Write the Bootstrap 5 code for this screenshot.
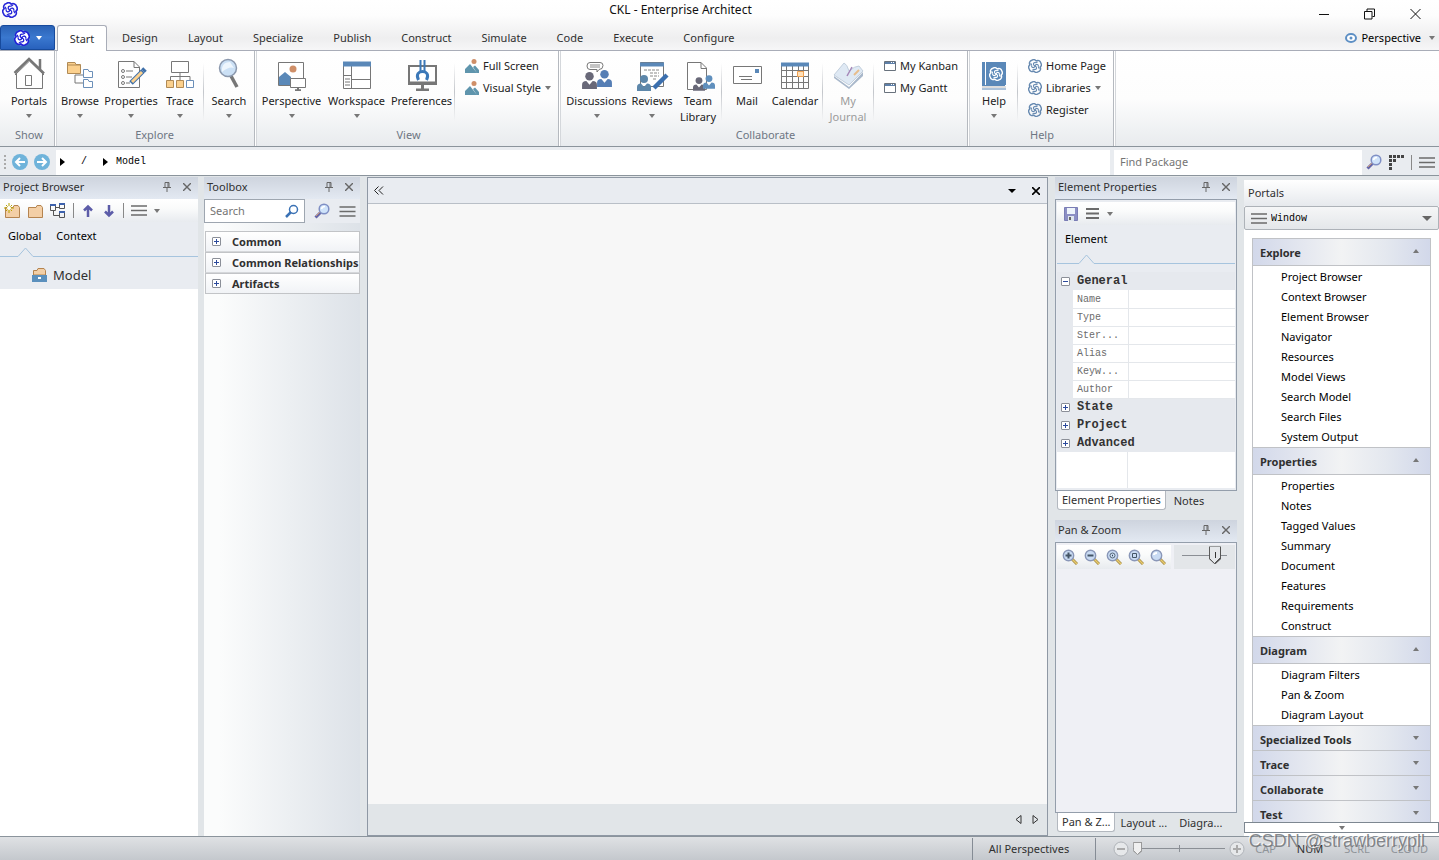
<!DOCTYPE html>
<html lang="en">
<head>
<meta charset="utf-8">
<meta name="viewport" content="width=device-width, initial-scale=1">
<title>CKL - Enterprise Architect</title>
<link rel="stylesheet" href="https://cdn.jsdelivr.net/npm/bootstrap@5.3.0/dist/css/bootstrap.min.css">
<style>
body{font:11px/16px "Noto Sans","Open Sans",sans-serif;color:#303030;background:#e1e5e8;height:100vh;overflow:hidden}
button{border:0;background:none;padding:0;color:inherit;font:inherit;line-height:16px;white-space:nowrap}
svg{display:block;flex:none;fill:none}
.mono{font-family:"Liberation Mono",monospace;font-size:10px;color:#000}
.caret{width:0;height:0;border:3px solid transparent;border-top:4px solid #777;border-bottom:0;flex:none}
.caret.up{border-top:0;border-bottom:4px solid #777}
/* title and tabs */
.top-area{background:linear-gradient(#fff 0,#fdfdfd 30%,#eeeeef 75%,#f7f7f8)}
.title-row{height:25px;padding:2px 0 0 2px}
.title-row .app-title{font-size:12px;color:#111;padding-right:96px}
.win-btns{gap:35px;top:8px;right:18px}
.tab-row{height:26px;border-bottom:1px solid #a9adb8}
.file-btn{width:55px;height:25px;background:linear-gradient(#2a62b5,#3a78cf 50%,#2861bd);border:1px solid #174a9c;border-radius:3px 3px 0 0;gap:6px}
.file-btn .caret{border-width:4px 3px 0;border-top-color:#fff}
.rtab{height:26px;padding:0 15px}
.rtab.on{width:50px;padding:0;margin:0 0 -1px 2px;background:#fff;border:1px solid #a9adb8;border-bottom:0;border-radius:3px 3px 0 0}
/* ribbon */
.ribbon{height:96px;background:linear-gradient(#fff 0,#fdfdfd 50%,#e8ebee);border-bottom:1px solid #8b949c}
.rgroup{border-right:1px solid #b5b9bf;box-shadow:1px 0 #fff,2px 0 #d4d7db;padding-top:4px}
.g-show{padding-left:4px}
.g-view{padding-left:4px;width:304px}
.g-collab{padding-left:5px;width:409px}
.g-help{padding-left:3px;width:146px}
.rgroup h6{font-size:11px;line-height:16px;font-weight:400;color:#6d7683;margin:0 0 3px;text-align:center}
.big{padding-top:2px;height:70px;display:flex;flex-direction:column;align-items:center;line-height:16px;color:#222;white-space:nowrap;flex:none}
.big svg{width:34px;height:34px;margin-bottom:2px}
.big .caret{margin-top:5px}
.big:disabled{color:#9b9b9b}
.w46{width:46px}.w50{width:50px}.w52{width:52px}.w65{width:65px}
.vsep{width:1px;height:58px;background:linear-gradient(transparent,#c3c6cb,transparent)}
.small-col{padding-left:10px}
.small-col button{height:22px;display:flex;align-items:center;gap:4px;color:#222}
/* address bar */
.addr{height:30px;background:#e9ecf0;border-bottom:1px solid #8b949c;padding-top:3px}
.addr .path{background:#fff;padding-left:4px}
.addr .nav-btns{gap:6px;padding:0 2px 0 4px}
.addr input{border:0;background:#fff;width:248px;padding:0 6px;color:#222;outline:0}
.addr input::placeholder,.sbox input::placeholder{color:#747474;opacity:1}
.tri{width:0;height:0;border:4px solid transparent;border-left:5px solid #000;border-right:0}
.tri.doc{border:4px solid transparent;border-top-color:#000;border-bottom:0}
.tri.sel{border:5px solid transparent;border-top-color:#666;border-bottom:0}
.bar{width:1px;height:15px;background:#888}
.gap7{gap:7px}
/* panels */
main{min-height:0;padding-top:1px;gap:7px}
.phead{height:22px;background:linear-gradient(#ced4de,#e3e9f2);padding:0 7px 2px 3px;gap:12px}
.tools{height:23px;background:linear-gradient(#fff,#fafbfb 40%,#e8ebef)}
.surface{background:#e9ecf1}
.proj{width:198px;margin-right:-1px}.tbox{width:156px}.props{width:182px}.ports{width:195px}
.inner-tab{color:#000;height:23px}
.inner-tabs{padding:2px 0 0 8px;gap:15px}
.notch{height:14px;width:100%}
.model-row{padding:0 0 0 32px;font-size:13px;height:28px;gap:6px}
.sbox{border:1px solid #9ea6b0;background:#fff;width:101px;height:24px}
.sbox input{border:0;outline:0;width:80px;padding:0 5px;background:none}
.tlist{background:linear-gradient(90deg,#fbfcfc 10%,#dde2e8);padding:8px 0 0 1px}
.tlist button{display:flex;align-items:center;width:155px;height:21px;font-weight:700;gap:11px;padding-left:6px;border:1px solid #c2c4c7;border-bottom-color:#d5d7da;background:linear-gradient(#fff,#f1f3f6)}
.tlist button:last-child{border-bottom-color:#c2c4c7}
.pm{width:9px;height:9px;border:1px solid #8b8f98;border-radius:1px;background:#fff;position:relative;display:block;flex:none}
.pm::before,.pm.plus::after{content:"";position:absolute;left:1px;top:3px;width:5px;height:1px;background:#2c4a9c}
.pm.plus::after{left:3px;top:1px;width:1px;height:5px}
.center{border:1px solid #8f98a4}
.dochead{height:26px;border-bottom:1px solid #b9bfc7;background:#e9ecf1;padding:0 7px 0 6px}
.docfoot{height:31px;padding-right:8px;gap:10px}
.canvas{background:#f7f7f7}
.frame{border:1px solid #949eab;background:#e9ecf1;padding:2px 1px}
.ptools{padding-left:7px}
.btabs{height:20px;padding-left:2px}
.btabs button{padding:0 8px;height:19px}
.btabs .on{background:#fff;border:1px solid #b3b8bf;border-top:0;border-radius:0 0 3px 3px;padding:0 4px}
.btabs.three{margin-bottom:3px}
.btabs.three button{padding:0 6px}
.btabs.three .on{padding:0 3px 0 4px}
.grid-t{width:100%;table-layout:fixed;border-collapse:collapse;background:#e6e9ee;margin-top:4px}
.grid-t col.c1{width:16px}.grid-t col.c2{width:55px}
.grid-t th,.grid-t td{height:18px;line-height:17px;padding:0 0 0 4px;border:0;font-weight:400;color:#6c6c6c}
.grid-t tr.r *{background:#fff;border-bottom:1px solid #e4e7eb}
.grid-t tr.r td:first-child{background:#e6e9ee;border:0}
.grid-t tr.r th{border-right:1px solid #e4e7eb}
.grid-t tr.h th{font-size:12px;font-weight:700;color:#333}
.filler{background:#fff;height:36px}
.filler div{width:71px;border-right:1px solid #e4e7eb}
input[type=range]{appearance:none;background:linear-gradient(#8b8f95,#8b8f95) center/100% 1px no-repeat;height:20px;margin:0}
input[type=range]::-webkit-slider-thumb{appearance:none;width:12px;height:18px;clip-path:polygon(0 0,100% 0,100% 70%,50% 100%,0 70%);background:linear-gradient(#333,#333) center 6px/1px 6px no-repeat,conic-gradient(from -45deg at 50% 100%,#e4e7ea 90deg,transparent 0) center 1px/10px 16px no-repeat,linear-gradient(#e4e7ea,#e4e7ea) center 1px/10px 11px no-repeat,#555}
.pan-head{margin-top:9px}
.pan-body{background:#eff0f5}
.zoomtools{width:114px;height:24px;padding:0 5px;gap:6px}
.pz{background:#e3e6e9;padding:0 8px;height:24px}.pz input{width:45px}
.ports{background:#fff;margin-top:3px}
.ports .ptitle{height:26px;padding:5px 4px;background:linear-gradient(#fff,#e6e9ed)}
.wsel{height:24px;border:1px solid #adb2b8;border-radius:2px;background:linear-gradient(#f5f6f7,#e4e7ea);padding:0 6px}
.wsel select{appearance:none;border:0;background:none;outline:0;padding:2px 4px 0}
.plist{margin:8px 8px 0;border:solid #c0c2c6;border-width:0 1px;min-height:0}
.plist .ph{display:flex;width:100%;height:25px;border-top:1px solid #c0c2c6;padding:7px 11px 0 7px;justify-content:space-between;font-weight:700;background:linear-gradient(90deg,#d2d8ea,#f2f3f4 50%,#e4e8ef 75%,#d2d8ea);line-height:14px}
.plist .ph .caret{margin-top:3px}
.plist .ph.open{height:28px;border-bottom:1px solid #c0c2c6}
.plist ul{padding:1px 0 0 28px;margin:0;list-style:none}
.plist a{color:#000;text-decoration:none;line-height:20px;display:block}
.more{height:11px;border:1px solid #7d8791;background:#fff;margin-bottom:3px}
.status{height:24px;border-top:1px solid #8b949c;background:linear-gradient(#dfe1e4,#c4c8cd)}
.status .bar{height:22px;background:#858c95}
.status .persp{padding:0 26px 0 16px}
.zoomer{padding:0 10px 0 17px;gap:4px}
input.zs{width:92px;background:linear-gradient(#8b8f95,#8b8f95) center/1px 7px no-repeat,linear-gradient(#8b8f95,#8b8f95) center/100% 1px no-repeat}
input.zs::-webkit-slider-thumb{height:13px;width:9px;background:conic-gradient(from -45deg at 50% 100%,#f0f0f0 90deg,transparent 0) center 1px/7px 11px no-repeat,linear-gradient(#f0f0f0,#f0f0f0) center 1px/7px 7px no-repeat,#999}
.keys{gap:21px;margin-right:11px}
.off{color:#8f9499}
.wm{right:14px;bottom:6px;font:18px/26px "Liberation Sans",sans-serif;color:#74777b;text-shadow:-1px -1px #fff;pointer-events:none;opacity:.85}
</style>
</head>
<body class="d-flex flex-column">
<svg width="0" height="0" class="position-absolute" aria-hidden="true">
<symbol id="logo" viewBox="0 0 16 16"><g stroke="currentColor" transform="rotate(12 8 8)"><path stroke-width="1.600" d="M8 2A3.600 3.600 0 0 1 13.700 3.200A3.600 3.600 0 0 1 14 8A3.600 3.600 0 0 1 12.800 13.700A3.600 3.600 0 0 1 8 14A3.600 3.600 0 0 1 2.300 12.800A3.600 3.600 0 0 1 2 8A3.600 3.600 0 0 1 3.200 2.300A3.600 3.600 0 0 1 8 2Z"/><path stroke-width="1.300" d="M8 8C5 7.500 5 4 8 4.200M8 8C8.500 5 12 5 11.800 8M8 8C11 8.500 11 12 8 11.800M8 8C7.500 11 4 11 4.200 8M8 4.200L10 2.500M11.800 8L13.500 10M8 11.800L6 13.500M4.200 8L2.500 6"/></g></symbol>
<symbol id="pin" viewBox="0 0 8 10"><path d="M2 .5H6V5.500H2ZM0 5.500H8M4 6V10M5 1V5" stroke="#666"/></symbol>
<symbol id="x" viewBox="0 0 8 8"><path d="M0 0L8 8M8 0L0 8" stroke="#666" stroke-width="1.400"/></symbol>
<symbol id="burger" viewBox="0 0 16 11"><path d="M0 1H16M0 5.500H16M0 10H16" stroke="#6b6b6b" stroke-width="1.700"/></symbol>
<symbol id="mag" viewBox="0 0 16 16"><path d="M1.500 14.500L6.500 9.500" stroke="#6666a8" stroke-width="3"/><path d="M2 13L6 9" stroke="#d39c72"/><circle cx="10" cy="6" r="4.800" fill="#cfe3fa" stroke="#7f8fc4" stroke-width="1.500"/><path d="M7.500 6Q8 3.500 11 3.500" stroke="#fff" stroke-width="1.500"/></symbol>
<symbol id="zm" viewBox="0 0 16 16"><path d="M10 10L15 15" stroke="#a38b48" stroke-width="3"/><path d="M10 10L15 15" stroke="#e9cb6c" stroke-width="1.400"/><circle cx="6.500" cy="6.500" r="5.200" fill="#c9dbf3" stroke="#8a97b8" stroke-width="1.400"/></symbol>
<symbol id="pic" viewBox="0 0 14 14"><circle cx="9" cy="2.500" r="2.500" fill="#cf8f68"/><path d="M0 14V10L5 5L12 14ZM8 8L10 6.500L14 11V14H12Z" fill="#5f95ad"/></symbol>
<symbol id="win" viewBox="0 0 12 10"><path d="M.5 .5H11.500V9.500H.5Z" fill="#fff" stroke="#69727d"/><path d="M1 2H11" stroke="#5d7fa8" stroke-width="2"/><path d="M7 1.500H8M9 1.500H10" stroke="#fff"/></symbol>
<symbol id="person" viewBox="0 0 14 16"><circle cx="7" cy="4" r="4" fill="currentColor"/><path d="M0 16V12Q0 8.500 4 8.500L7 12L10 8.500Q14 8.500 14 12V16Z" fill="currentColor"/></symbol>
<symbol id="folder" viewBox="0 0 15 14"><path d="M.5 13.500V3.500H8L9 1.500H13L14.500 3.500V13.500Z" fill="#f3cfa6" stroke="#b5844f"/></symbol>
</svg>

<header class="top-area">
 <div class="title-row d-flex position-relative">
  <svg width="16" height="16" style="color:#2727d8"><use href="#logo"/></svg>
  <div class="app-title flex-grow-1 text-center">CKL - Enterprise Architect</div>
  <div class="win-btns d-flex align-items-end position-absolute">
   <button aria-label="Minimize"><svg width="10" height="12"><path d="M0 6.500H10" stroke="#111"/></svg></button>
   <button aria-label="Restore"><svg width="11" height="12"><path d="M.5 3.500H8V11H.5ZM3 3V1H10.500V8.500H8.500" stroke="#111"/></svg></button>
   <button aria-label="Close"><svg width="11" height="12"><path d="M.5 1L10.500 11M10.500 1L.5 11" stroke="#111"/></svg></button>
  </div>
 </div>
 <nav class="tab-row d-flex">
  <button class="file-btn d-flex align-items-center justify-content-center" aria-label="File"><svg width="16" height="16"><circle cx="8" cy="8" r="7.500" fill="#fff"/><use href="#logo" style="color:#2020d8"/></svg><span class="caret"></span></button>
  <button class="rtab on">Start</button><button class="rtab">Design</button><button class="rtab">Layout</button><button class="rtab">Specialize</button><button class="rtab">Publish</button><button class="rtab">Construct</button><button class="rtab">Simulate</button><button class="rtab">Code</button><button class="rtab">Execute</button><button class="rtab">Configure</button>
  <button class="ms-auto d-flex align-items-center gap-1 text-black me-1"><svg width="12" height="10"><ellipse cx="6" cy="5" rx="5" ry="4" fill="#fff" stroke="#5d8fc4" stroke-width="2"/><circle cx="6" cy="5" r="1.500" fill="#5d8fc4"/></svg>Perspective<span class="caret ms-1"></span></button>
 </nav>
</header>

<section class="ribbon d-flex">
 <div class="rgroup g-show d-flex flex-column justify-content-between"><div class="d-flex">
  <button class="big w50"><svg viewBox="0 0 34 34"><path d="M4.500 16V31.500H30.500V16M13.500 28.500V18.500H19.500V28.500ZM3 18L17.500 4L32 18" stroke="#777" /><path d="M2.500 16L17 2L32 16.500M28 12V2" stroke="#777" stroke-width="2.500"/></svg>Portals<span class="caret"></span></button></div><h6>Show</h6></div>
 <div class="rgroup d-flex flex-column justify-content-between"><div class="d-flex">
  <button class="big w50"><svg viewBox="0 0 34 34"><path d="M12 18V26H20M12 18H20" stroke="#777"/><path d="M4.500 16.500V5.500H12L13 7.500H17.500V16.500Z" fill="#fbd08d" stroke="#b08a55"/><path d="M5 8H17" stroke="#b08a55"/><path d="M20.500 20.500V12.500H25L26 14.500H29.500V20.500ZM20.500 30.500V22.500H25L26 24.500H29.500V30.500Z" fill="#fff" stroke="#6b8fb8"/></svg>Browse<span class="caret"></span></button>
  <button class="big w52"><svg viewBox="0 0 34 34"><path d="M4.500 4.500H20L25.500 10V30.500H4.500ZM20 4.500V10.500H25.500M12 14H19M12 20H18M12 26H16" stroke="#777"/><circle cx="9" cy="14" r="1.500" stroke="#777"/><circle cx="9" cy="20" r="1.500" stroke="#777"/><circle cx="9" cy="26" r="1.500" stroke="#777"/><path d="M17 26L29 14" stroke="#3e6fa8" stroke-width="5"/><path d="M18 25L28 15" stroke="#fbd08d" stroke-width="3"/><path d="M29 14L31 12" stroke="#3e6fa8" stroke-width="5"/></svg>Properties<span class="caret"></span></button>
  <button class="big w46"><svg viewBox="0 0 34 34"><path d="M8.500 4.500H25.500V15.500H8.500ZM17 16V23M7.500 23V19.500H27V23" stroke="#777"/><path d="M3.500 23.500H10.500V30.500H3.500ZM13.500 23.500H20.500V30.500H13.500Z" fill="#fbd08d" stroke="#b08a55"/><path d="M23.500 23.500H30.500V30.500H23.500Z" fill="#fff" stroke="#6b8fb8"/></svg>Trace<span class="caret"></span></button>
  <i class="vsep mt-2"></i>
  <button class="big w50"><svg viewBox="0 0 34 34"><path d="M19 19L25 30" stroke="#777" stroke-width="3.500"/><circle cx="16" cy="11" r="8.500" fill="#cbe0f5" stroke="#8b98ad" stroke-width="1.500"/><path d="M10 11Q11 5 18 5L22 11Q17 9 10 15Z" fill="#eef6fd"/></svg>Search<span class="caret"></span></button></div><h6>Explore</h6></div>
 <div class="rgroup g-view d-flex flex-column justify-content-between"><div class="d-flex">
  <button class="big w65"><svg viewBox="0 0 34 34"><path d="M3.500 5.500H28.500V28.500H3.500Z" fill="#fff" stroke="#777"/><circle cx="18" cy="12" r="3.500" fill="#cf8f68"/><path d="M4 28V20L10 15L16 20V28Z" fill="#5a88b8"/><path d="M15.500 21.500H30.500V30.500H15.500Z" fill="#fff" stroke="#777"/><path d="M23 31V33M20 33.300H26" stroke="#777" stroke-width="2"/></svg>Perspective<span class="caret"></span></button>
  <button class="big w65"><svg viewBox="0 0 34 34"><path d="M3.500 5.500H30.500V31.500H3.500ZM11.500 9V31.500M11.500 22.500H30.500M3.500 18.500H11.500" fill="#fff" stroke="#777"/><path d="M3 7H31" stroke="#5a88b8" stroke-width="5"/><path d="M5 22H10M5 25H10M5 28H10" stroke="#777"/></svg>Workspace<span class="caret"></span></button>
  <button class="big w65"><svg viewBox="0 0 34 34"><path d="M4 9H31V27H4Z" fill="#fff" stroke="#777" stroke-width="2"/><path d="M4 26H31M17.500 27V32M11 33H24" stroke="#777" stroke-width="3"/><path d="M15.500 3V15M19.500 3V15" stroke="#3b78b8" stroke-width="2"/><path d="M13.500 23C10.500 17 14 14.500 17.500 14.500C21 14.500 24.500 17 21.500 23" stroke="#3b78b8" stroke-width="3"/></svg>Preferences</button>
  <i class="vsep mt-2"></i>
  <div class="small-col"><button><svg width="14" height="14"><use href="#pic"/></svg>Full Screen</button><button><svg width="14" height="14"><use href="#pic"/></svg>Visual Style<span class="caret"></span></button></div></div><h6>View</h6></div>
 <div class="rgroup g-collab d-flex flex-column justify-content-between"><div class="d-flex">
  <button class="big w65"><svg viewBox="0 0 34 34"><path d="M10 5.500H20Q23 5.500 23 8.500Q23 12.500 19 12.500L17 15V12.500H10Q7 12.500 7 9Q7 5.500 10 5.500Z" fill="#fff" stroke="#777"/><path d="M10 8H20M10 10H20" stroke="#888"/><use href="#person" x="2" y="15" width="15" height="17" style="color:#686878"/><use href="#person" x="17" y="13" width="15" height="17" style="color:#557eb5"/></svg>Discussions<span class="caret"></span></button>
  <button class="big w46"><svg viewBox="0 0 34 34"><path d="M5.500 5.500H28.500V29.500H5.500Z" fill="#fff" stroke="#777"/><path d="M5 7.500H29" stroke="#5a88b8" stroke-width="4"/><path d="M9 13H24M15 16H24M15 19H24M18 22H22" stroke="#888" stroke-dasharray="3 1"/><path d="M19 31L32 18" stroke="#3b6fae" stroke-width="4.500"/><use href="#person" x="2" y="18" width="14" height="16" style="color:#5d87aa"/></svg>Reviews<span class="caret"></span></button>
  <button class="big w46"><svg viewBox="0 0 34 34"><path d="M6.500 5.500H20L25.500 11V32.500H6.500ZM20 5.500V11.500H25.500" fill="#fff" stroke="#777"/><use href="#person" x="12" y="20" width="12" height="14" style="color:#686878"/><use href="#person" x="22" y="18" width="12" height="14" style="color:#5f8fbd"/></svg>Team<br>Library</button>
  <i class="vsep mt-2"></i>
  <button class="big w50"><svg viewBox="0 0 34 34"><path d="M3.500 9.500H31.500V26.500H3.500Z" fill="#fff" stroke="#777"/><path d="M9 19.500H22M11 22.500H22" stroke="#777"/><path d="M25 12H29V16H25Z" fill="#5a88b8"/></svg>Mail</button>
  <button class="big w46"><svg viewBox="0 0 34 34"><path d="M3.500 7V31.500H30.500V7M3 13.500H30M3 19.500H30M3 25.500H30M8.500 8V31M14.500 8V31M20.500 8V31M25.500 8V31" stroke="#777"/><path d="M3 7.500H31" stroke="#5a88b8" stroke-width="4"/><path d="M19.500 14.500H25.500V19.500H19.500Z" fill="#ffe0b8" stroke="#f0a050"/></svg>Calendar</button>
  <i class="vsep mt-2 ms-1"></i>
  <button class="big w50" disabled><svg viewBox="0 0 34 34"><path d="M3 19L18 30L32 15V19L18 32L3 21Z" fill="#a9b8cb"/><path d="M3 18L13 6Q16 7 18 14Q24 9 28 9L32 14L18 28Z" fill="#dfe9f4" stroke="#c2cfdd"/><path d="M16 19L21 10" stroke="#a586b8" stroke-width="1.500"/><path d="M23 18L28 13" stroke="#e8bd8c" stroke-width="2"/></svg>My<br>Journal</button>
  <i class="vsep mt-2"></i>
  <div class="small-col"><button><svg width="12" height="10"><use href="#win"/></svg>My Kanban</button><button><svg width="12" height="10"><use href="#win"/></svg>My Gantt</button></div></div><h6>Collaborate</h6></div>
 <div class="rgroup g-help d-flex flex-column justify-content-between"><div class="d-flex">
  <button class="big w46"><svg viewBox="0 0 34 34"><path d="M5 5H8V28H5Z" fill="#5a88b8"/><path d="M9 5H29V28H9Z" fill="#5a88b8"/><path d="M5 28.500H28M5 32H29" stroke="#5a88b8"/><path d="M5 30H29" stroke="#ddd" stroke-width="2"/><use href="#logo" x="12" y="10" width="14" height="14" style="color:#fff"/></svg>Help<span class="caret"></span></button>
  <i class="vsep mt-2"></i>
  <div class="small-col"><button><svg width="14" height="14" style="color:#6689b0"><use href="#logo"/></svg>Home Page</button><button><svg width="14" height="14" style="color:#6689b0"><use href="#logo"/></svg>Libraries<span class="caret"></span></button><button><svg width="14" height="14" style="color:#6689b0"><use href="#logo"/></svg>Register</button></div></div><h6>Help</h6></div>
</section>

<section class="addr d-flex">
 <div class="nav-btns d-flex align-items-center"><svg width="2" height="16"><path d="M1 1V16" stroke="#aaa" stroke-width="2" stroke-dasharray="2 2"/></svg>
  <button aria-label="Back"><svg width="16" height="16"><circle cx="8" cy="8" r="8" fill="#6fb3da"/><path d="M13 8H4M8 4L4 8L8 12" stroke="#fff" stroke-width="2"/></svg></button>
  <button aria-label="Forward"><svg width="16" height="16"><circle cx="8" cy="8" r="8" fill="#6fb3da"/><path d="M3 8H12M8 4L12 8L8 12" stroke="#fff" stroke-width="2"/></svg></button></div>
 <div class="path mono flex-grow-1 d-flex align-items-center ms-1"><i class="tri me-3"></i><span class="me-3">/</span><i class="tri me-2"></i><span>Model</span></div>
 <input class="ms-1" aria-label="Find Package" placeholder="Find Package">
 <div class="gap7 d-flex align-items-center px-1"><svg width="16" height="16"><use href="#mag"/></svg>
 <svg width="15" height="15"><path d="M0 1.500H15M0 5.500H7M0 9.500H3M0 13.500H3" stroke="#444" stroke-width="3" stroke-dasharray="3 1"/></svg><i class="bar"></i><svg width="16" height="11"><use href="#burger"/></svg></div>
</section>

<main class="d-flex flex-grow-1">
 <section class="proj d-flex flex-column">
  <div class="phead d-flex align-items-center"><span class="me-auto">Project Browser</span><svg width="8" height="10"><use href="#pin"/></svg><svg width="8" height="8"><use href="#x"/></svg></div>
  <div class="tools gap7 d-flex align-items-center px-1"><svg width="17" height="15"><use href="#folder" x="1" y="1" width="15" height="14"/><path d="M5 0V10M0 5H10M2 2L8 8M8 2L2 8" stroke="#b8a300"/><circle cx="5" cy="5" r="2" fill="#fff"/></svg><svg width="15" height="14"><use href="#folder"/></svg>
  <svg width="16" height="16"><path d="M.5 2.500H5.500V7.500H.5ZM9.500 1.500H14.500V5.500H9.500ZM9.500 9.500H14.500V14.500H9.500ZM6 4.500H9M3.500 8V12.500H9" stroke="#555"/><path d="M0 2H6M9 1H15M9 9H15" stroke="#3d62ad" stroke-width="2"/></svg><i class="bar"></i>
  <svg width="14" height="14"><path d="M7 13V3M3 6.500L7 2.500L11 6.500" stroke="#5c5ca8" stroke-width="2.500"/></svg><svg width="14" height="14"><path d="M7 1V11M3 7.500L7 11.500L11 7.500" stroke="#5c5ca8" stroke-width="2.500"/></svg><i class="bar"></i><svg width="16" height="11"><use href="#burger"/></svg><span class="caret"></span></div>
  <div class="surface"><div class="inner-tabs d-flex"><button class="inner-tab">Global</button><button class="inner-tab">Context</button></div>
  <svg class="notch"><path d="M0 9.500H18L25.500 1L33 9.500H500" stroke="#a6c4de"/></svg>
  <div class="model-row d-flex align-items-center"><svg width="15" height="16"><path d="M1.500 8V3.500H5L6 1.500H12L13.500 3.500V8Z" fill="#f3cfa6" stroke="#b5844f"/><path d="M0 8H15V15H0Z" fill="#5b90bd"/><path d="M6 10H9V12H6Z" fill="#fff"/></svg>Model</div></div>
  <div class="flex-grow-1 bg-white"></div>
 </section>

 <section class="tbox d-flex flex-column">
  <div class="phead d-flex align-items-center"><span class="me-auto">Toolbox</span><svg width="8" height="10"><use href="#pin"/></svg><svg width="8" height="8"><use href="#x"/></svg></div>
  <div class="surface d-flex align-items-center justify-content-between pe-1"><div class="sbox d-flex align-items-center"><input aria-label="Search" placeholder="Search"><svg width="14" height="14"><path d="M1 13L6 8" stroke="#3b72b5" stroke-width="2.500"/><circle cx="8.500" cy="5.500" r="4" stroke="#3b72b5" stroke-width="1.500"/></svg></div><svg width="16" height="16"><use href="#mag"/></svg><svg width="17" height="11"><use href="#burger"/></svg></div>
  <div class="tlist flex-grow-1"><button><i class="pm plus"></i>Common</button><button><i class="pm plus"></i>Common Relationships</button><button><i class="pm plus"></i>Artifacts</button></div>
 </section>

 <section class="center d-flex flex-column flex-grow-1">
  <div class="dochead d-flex align-items-center"><svg width="10" height="9"><path d="M4.500 .5L.5 4.500L4.500 8.500M9 .5L5 4.500L9 8.500" stroke="#222"/></svg><span class="tri doc ms-auto me-3"></span><svg width="8" height="8"><path d="M0 0L8 8M8 0L0 8" stroke="#000" stroke-width="1.600"/></svg></div>
  <div class="canvas flex-grow-1"></div>
  <div class="docfoot d-flex align-items-center justify-content-end"><svg width="7" height="9"><path d="M6 .5L1 4.500L6 8.500Z" stroke="#333"/></svg><svg width="7" height="9"><path d="M1 .5L6 4.500L1 8.500Z" stroke="#333"/></svg></div>
 </section>

 <section class="props d-flex flex-column">
  <div class="phead d-flex align-items-center"><span class="me-auto">Element Properties</span><svg width="8" height="10"><use href="#pin"/></svg><svg width="8" height="8"><use href="#x"/></svg></div>
  <div class="frame"><div class="tools ptools d-flex align-items-center gap-2"><svg width="14" height="14"><path d="M.5 .5H13.500V13.500H.5Z" fill="#8c8fc4" stroke="#7a7db5"/><path d="M3 1H11V7H3Z" fill="#eef4fb"/><path d="M4 9H10V14H4Z" fill="#dfe6ee"/><path d="M5 10H7V13H5Z" fill="#666"/></svg><svg width="13" height="11"><path d="M0 1H13M0 5.500H13M0 10H13" stroke="#6b6b6b" stroke-width="2"/></svg><span class="caret"></span></div>
   <div class="inner-tabs d-flex"><button class="inner-tab">Element</button></div>
   <svg class="notch mt-1"><path d="M0 9.500H22L29.500 1L37 9.500H500" stroke="#a6c4de"/></svg>
   <table class="grid-t mono"><colgroup><col class="c1"><col class="c2"><col></colgroup>
    <tr class="h"><td><i class="pm"></i></td><th colspan="2">General</th></tr>
    <tr class="r"><td></td><th>Name</th><td></td></tr><tr class="r"><td></td><th>Type</th><td></td></tr><tr class="r"><td></td><th>Ster...</th><td></td></tr><tr class="r"><td></td><th>Alias</th><td></td></tr><tr class="r"><td></td><th>Keyw...</th><td></td></tr><tr class="r"><td></td><th>Author</th><td></td></tr>
    <tr class="h"><td><i class="pm plus"></i></td><th colspan="2">State</th></tr><tr class="h"><td><i class="pm plus"></i></td><th colspan="2">Project</th></tr><tr class="h"><td><i class="pm plus"></i></td><th colspan="2">Advanced</th></tr></table>
   <div class="filler d-flex"><div></div></div></div>
  <div class="btabs d-flex"><button class="on">Element Properties</button><button>Notes</button></div>
  <div class="phead pan-head d-flex align-items-center">
   <span class="me-auto">Pan &amp; Zoom</span><svg width="8" height="10"><use href="#pin"/></svg><svg width="8" height="8"><use href="#x"/></svg></div>
  <div class="frame pan-body flex-grow-1"><div class="d-flex justify-content-between"><div class="tools zoomtools d-flex align-items-center">
   <svg width="16" height="16"><use href="#zm"/><path d="M3.500 6.500H9.500M6.500 3.500V9.500" stroke="#456" stroke-width="2"/></svg><svg width="16" height="16"><use href="#zm"/><path d="M3.500 6.500H9.500" stroke="#456" stroke-width="2"/></svg><svg width="16" height="16"><use href="#zm"/><circle cx="6.500" cy="6.500" r="2.500" stroke="#567"/><path d="M6 6.500H7" stroke="#345" stroke-width="1.500"/></svg><svg width="16" height="16"><use href="#zm"/><path d="M4.500 4.500H8.500V8.500H4.500Z" stroke="#456"/></svg><svg width="16" height="16"><use href="#zm"/><path d="M4 6Q4 4 7 4" stroke="#fff" stroke-width="2"/></svg></div><div class="pz d-flex align-items-start"><input type="range" aria-label="Zoom" value="82"></div></div></div>
  <div class="btabs three d-flex"><button class="on">Pan &amp; Z...</button><button>Layout ...</button><button>Diagra...</button></div>
 </section>

 <section class="ports d-flex flex-column">
  <div class="ptitle">Portals</div>
  <label class="wsel d-flex align-items-center"><svg width="16" height="11"><use href="#burger"/></svg><select class="mono flex-grow-1" aria-label="Portal"><option>Window</option></select><i class="tri sel"></i></label>
  <div class="plist flex-grow-1 overflow-hidden">
   <button class="ph open">Explore<i class="caret up"></i></button><ul><li><a href="#">Project Browser</a><li><a href="#">Context Browser</a><li><a href="#">Element Browser</a><li><a href="#">Navigator</a><li><a href="#">Resources</a><li><a href="#">Model Views</a><li><a href="#">Search Model</a><li><a href="#">Search Files</a><li><a href="#">System Output</a></ul>
   <button class="ph open">Properties<i class="caret up"></i></button><ul><li><a href="#">Properties</a><li><a href="#">Notes</a><li><a href="#">Tagged Values</a><li><a href="#">Summary</a><li><a href="#">Document</a><li><a href="#">Features</a><li><a href="#">Requirements</a><li><a href="#">Construct</a></ul>
   <button class="ph open">Diagram<i class="caret up"></i></button><ul><li><a href="#">Diagram Filters</a><li><a href="#">Pan &amp; Zoom</a><li><a href="#">Diagram Layout</a></ul>
   <button class="ph">Specialized Tools<i class="caret"></i></button><button class="ph">Trace<i class="caret"></i></button><button class="ph">Collaborate<i class="caret"></i></button><button class="ph">Test<i class="caret"></i></button>
  </div>
  <button class="more d-flex align-items-center justify-content-center" aria-label="More"><span class="caret"></span></button>
 </section>
</main>

<footer class="status d-flex align-items-center justify-content-end position-relative">
 <i class="bar"></i><span class="persp">All Perspectives</span><i class="bar"></i>
 <div class="zoomer d-flex align-items-center"><svg width="16" height="16"><circle cx="8" cy="8" r="7" fill="#e6e8ea" stroke="#b0b4b9"/><path d="M4 8H12" stroke="#aaa" stroke-width="2"/></svg><input class="zs" type="range" aria-label="Diagram zoom" value="0"><svg width="16" height="16"><circle cx="8" cy="8" r="7" fill="#e6e8ea" stroke="#b0b4b9"/><path d="M4 8H12M8 4V12" stroke="#aaa" stroke-width="2"/></svg></div>
 <div class="keys d-flex"><span class="off">CAP</span><span>NUM</span><span class="off">SCRL</span><span class="off">CLOUD</span></div>
 <span class="wm position-absolute">CSDN @strawberrypll</span>
</footer>
<script src="https://cdn.jsdelivr.net/npm/bootstrap@5.3.0/dist/js/bootstrap.bundle.min.js"></script>
</body>
</html>
